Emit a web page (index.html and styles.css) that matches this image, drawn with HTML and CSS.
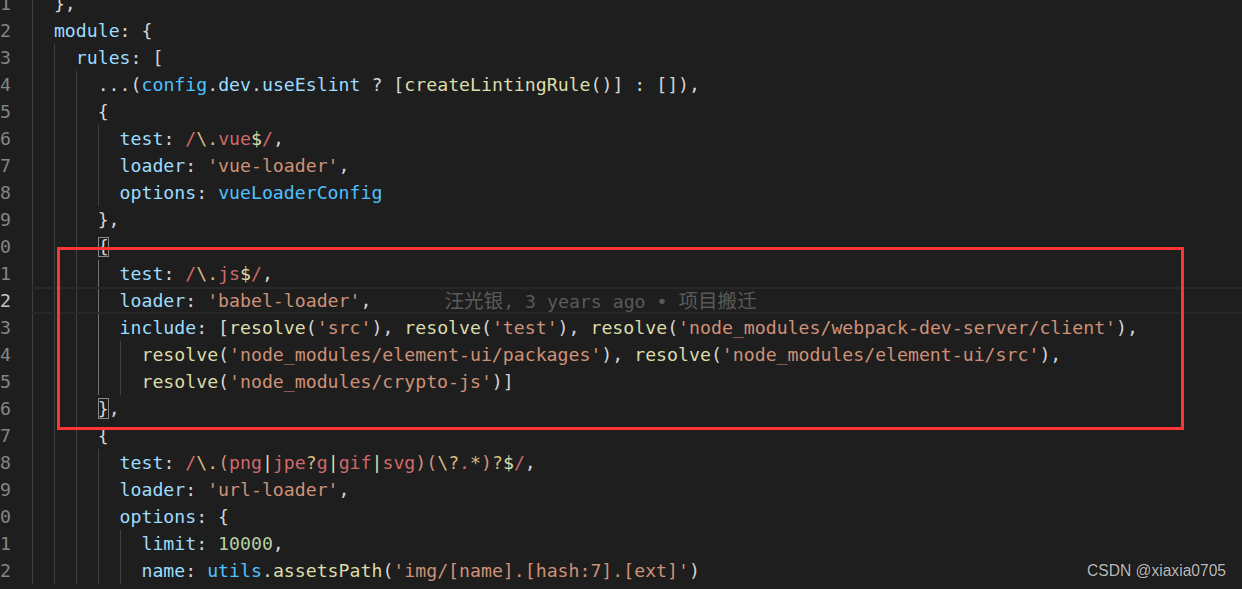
FILE: index.html
```html
<!DOCTYPE html>
<html lang="en">
<head>
<meta charset="utf-8">
<title>webpack.base.conf.js</title>
<link rel="stylesheet" href="styles.css">
</head>
<body>
<div class="editor">
  <div class="gutter">
    <div class="ln">61</div><div class="ln">62</div><div class="ln">63</div><div class="ln">64</div><div class="ln">65</div><div class="ln">66</div><div class="ln">67</div><div class="ln">68</div><div class="ln">69</div><div class="ln">70</div><div class="ln">71</div><div class="ln ln-active">72</div><div class="ln">73</div><div class="ln">74</div><div class="ln">75</div><div class="ln">76</div><div class="ln">77</div><div class="ln">78</div><div class="ln">79</div><div class="ln">80</div><div class="ln">81</div><div class="ln">82</div>
  </div>
  <div class="code">
    <div class="line"><span class="g"></span><span class="p">},</span></div>
    <div class="line"><span class="g"></span><span class="v">module</span><span class="p">: {</span></div>
    <div class="line"><span class="g"></span><span class="g"></span><span class="v">rules</span><span class="p">: [</span></div>
    <div class="line"><span class="g"></span><span class="g"></span><span class="g"></span><span class="p">...(</span><span class="c">config</span><span class="p">.</span><span class="v">dev</span><span class="p">.</span><span class="v">useEslint</span><span class="p"> ? [</span><span class="f">createLintingRule</span><span class="p">()] : []),</span></div>
    <div class="line"><span class="g"></span><span class="g"></span><span class="g"></span><span class="p">{</span></div>
    <div class="line"><span class="g"></span><span class="g"></span><span class="g"></span><span class="g"></span><span class="v">test</span><span class="p">: </span><span class="r">/</span><span class="re">\.</span><span class="r">vue</span><span class="ra">$</span><span class="r">/</span><span class="p">,</span></div>
    <div class="line"><span class="g"></span><span class="g"></span><span class="g"></span><span class="g"></span><span class="v">loader</span><span class="p">: </span><span class="s">'vue-loader'</span><span class="p">,</span></div>
    <div class="line"><span class="g"></span><span class="g"></span><span class="g"></span><span class="g"></span><span class="v">options</span><span class="p">: </span><span class="c">vueLoaderConfig</span></div>
    <div class="line"><span class="g"></span><span class="g"></span><span class="g"></span><span class="p">},</span></div>
    <div class="line"><span class="g"></span><span class="g"></span><span class="g"></span><span class="p match">{</span></div>
    <div class="line"><span class="g"></span><span class="g"></span><span class="g"></span><span class="g g-active"></span><span class="v">test</span><span class="p">: </span><span class="r">/</span><span class="re">\.</span><span class="r">js</span><span class="ra">$</span><span class="r">/</span><span class="p">,</span></div>
    <div class="line line-current"><span class="g"></span><span class="g"></span><span class="g"></span><span class="g g-active"></span><span class="v">loader</span><span class="p">: </span><span class="s">'babel-loader'</span><span class="p">,</span><span class="blame"><span class="cjk">汪光银</span>, 3 years ago • <span class="cjk">项目搬迁</span></span></div>
    <div class="line"><span class="g"></span><span class="g"></span><span class="g"></span><span class="g g-active"></span><span class="v">include</span><span class="p">: [</span><span class="f">resolve</span><span class="p">(</span><span class="s">'src'</span><span class="p">), </span><span class="f">resolve</span><span class="p">(</span><span class="s">'test'</span><span class="p">), </span><span class="f">resolve</span><span class="p">(</span><span class="s">'node_modules/webpack-dev-server/client'</span><span class="p">),</span></div>
    <div class="line"><span class="g"></span><span class="g"></span><span class="g"></span><span class="g g-active"></span><span class="g"></span><span class="f">resolve</span><span class="p">(</span><span class="s">'node_modules/element-ui/packages'</span><span class="p">), </span><span class="f">resolve</span><span class="p">(</span><span class="s">'node_modules/element-ui/src'</span><span class="p">),</span></div>
    <div class="line"><span class="g"></span><span class="g"></span><span class="g"></span><span class="g g-active"></span><span class="g"></span><span class="f">resolve</span><span class="p">(</span><span class="s">'node_modules/crypto-js'</span><span class="p">)]</span></div>
    <div class="line"><span class="g"></span><span class="g"></span><span class="g"></span><span class="p"><span class="match">}</span>,</span></div>
    <div class="line"><span class="g"></span><span class="g"></span><span class="g"></span><span class="p">{</span></div>
    <div class="line"><span class="g"></span><span class="g"></span><span class="g"></span><span class="g"></span><span class="v">test</span><span class="p">: </span><span class="r">/</span><span class="re">\.</span><span class="rg">(</span><span class="r">png</span><span class="ra">|</span><span class="r">jpe</span><span class="re">?</span><span class="r">g</span><span class="ra">|</span><span class="r">gif</span><span class="ra">|</span><span class="r">svg</span><span class="rg">)(</span><span class="re">\?</span><span class="r">.</span><span class="re">*</span><span class="rg">)</span><span class="re">?</span><span class="ra">$</span><span class="r">/</span><span class="p">,</span></div>
    <div class="line"><span class="g"></span><span class="g"></span><span class="g"></span><span class="g"></span><span class="v">loader</span><span class="p">: </span><span class="s">'url-loader'</span><span class="p">,</span></div>
    <div class="line"><span class="g"></span><span class="g"></span><span class="g"></span><span class="g"></span><span class="v">options</span><span class="p">: {</span></div>
    <div class="line"><span class="g"></span><span class="g"></span><span class="g"></span><span class="g"></span><span class="g"></span><span class="v">limit</span><span class="p">: </span><span class="n">10000</span><span class="p">,</span></div>
    <div class="line"><span class="g"></span><span class="g"></span><span class="g"></span><span class="g"></span><span class="g"></span><span class="v">name</span><span class="p">: </span><span class="c">utils</span><span class="p">.</span><span class="f">assetsPath</span><span class="p">(</span><span class="s">'img/[name].[hash:7].[ext]'</span><span class="p">)</span></div>
  </div>
  <div class="annot-box"></div>
  <div class="watermark">CSDN @xiaxia0705</div>
</div>
</body>
</html>
```
FILE: styles.css
```css
html, body {
  margin: 0;
  padding: 0;
  background: #1e1e1e;
  overflow: hidden;
}

.editor {
  position: relative;
  width: 1242px;
  height: 589px;
  display: flex;
  overflow: hidden;
  background: #1e1e1e;
  font-family: "DejaVu Sans Mono", "Liberation Mono", monospace;
  font-size: 18.2px;
}

.gutter {
  width: 11px;
  flex: none;
  margin-top: -10px;
  margin-right: 21px;
  overflow: hidden;
  direction: rtl;
  color: #858585;
}

.ln {
  height: 27px;
  line-height: 27px;
  white-space: nowrap;
}

.ln-active {
  color: #c6c6c6;
}

.code {
  flex: 1;
  margin-top: -10px;
}

.line {
  height: 27px;
  line-height: 27px;
  white-space: pre;
  color: #d4d4d4;
  display: flex;
  align-items: center;
  box-sizing: border-box;
}

.line-current {
  border-top: 2px solid #282828;
  border-bottom: 2px solid #282828;
}

.g {
  display: inline-block;
  flex: none;
  width: 2ch;
  height: 27px;
  box-sizing: border-box;
  border-left: 1px solid #404040;
}

.line-current .g {
  height: 23px;
}

.g-active {
  border-left-color: #707070;
}

.p { color: #d4d4d4; }
.v { color: #9cdcfe; }
.c { color: #4fc1ff; }
.f { color: #dcdcaa; }
.s { color: #ce9178; }
.n { color: #b5cea8; }
.r { color: #d16969; }
.re { color: #d7ba7d; }
.ra { color: #dcdcaa; }
.rg { color: #ce9178; }

.match {
  outline: 1px solid #888888;
  outline-offset: -1px;
  line-height: 20px;
}

.blame {
  margin-left: 73px;
  color: #5a5a5a;
}

.cjk {
  font-family: "Noto Sans CJK SC", sans-serif;
  font-size: 19.6px;
}

.annot-box {
  position: absolute;
  left: 57px;
  top: 247px;
  width: 1127px;
  height: 183px;
  box-sizing: border-box;
  border: 3px solid #ff3535;
  pointer-events: none;
}

.watermark {
  position: absolute;
  right: 16px;
  bottom: 9px;
  font-family: "Liberation Sans", Arial, sans-serif;
  font-size: 15.6px;
  color: #bdbdbd;
  text-shadow: 0 0 1px #000;
}
```
